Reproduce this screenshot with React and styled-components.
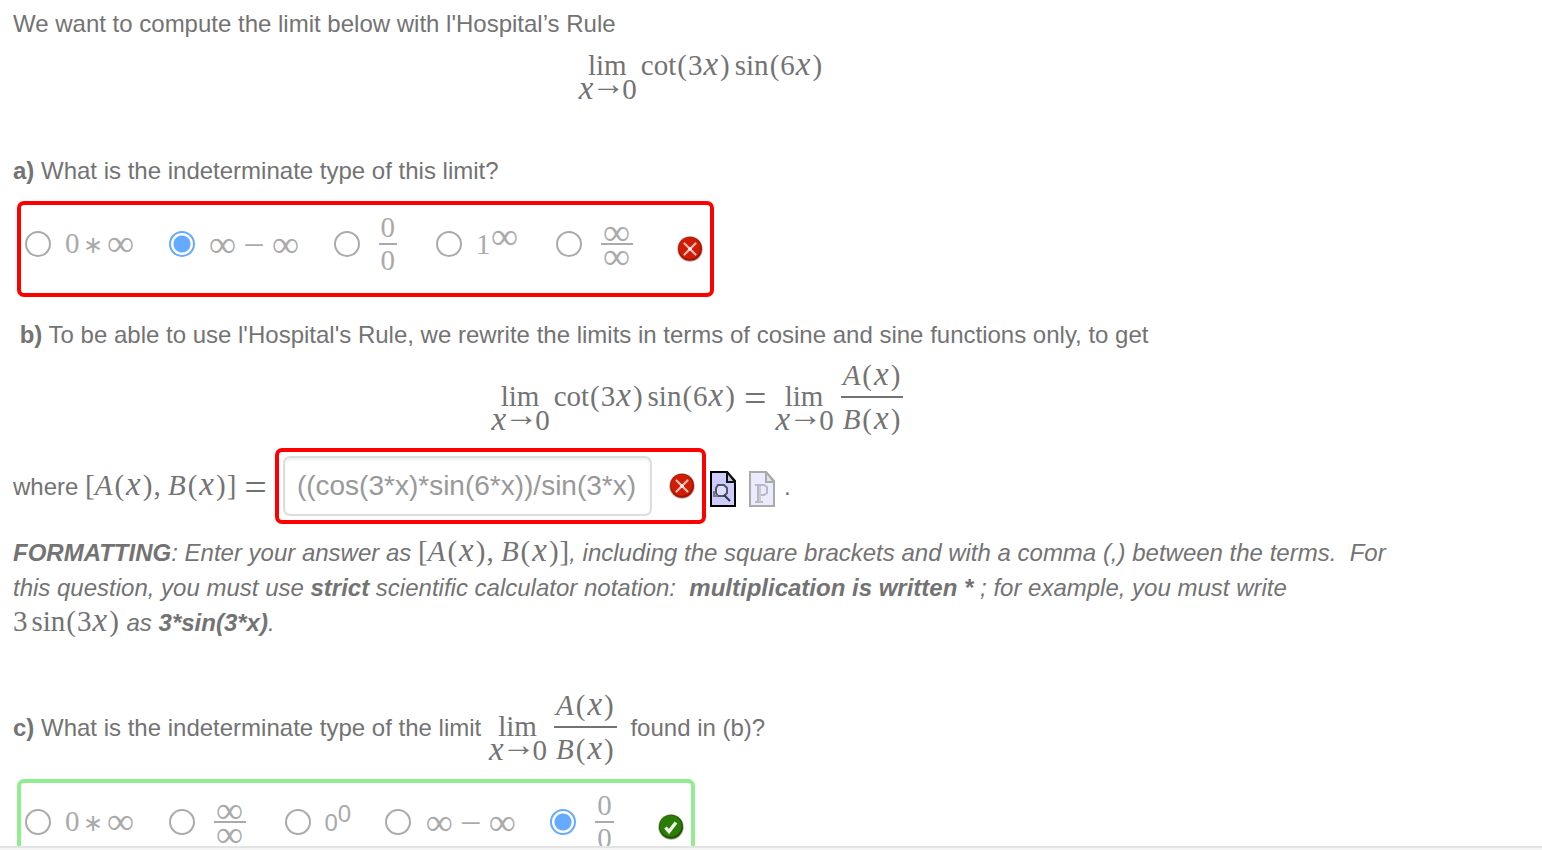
import React from 'react'
import { styled, createGlobalStyle } from 'styled-components'

const GlobalStyle = createGlobalStyle`
    * {
        box-sizing: border-box;
    }
    body {
        margin: 0;
        background-color: white;
    }
`
const Page = styled.div`
    height: 100vh;
    display: flex;
    flex-direction: column;
    font-family: "Liberation Sans", Arial, sans-serif;
    font-size: 24px;
    line-height: 35px;
    color: #737373;
`
const Content = styled.main`
    flex: 1;
    min-height: 0;
    overflow: hidden;
    padding: 6px 10% 0 13px;
`
const BottomBar = styled.footer`
    flex: none;
    height: 4px;
    border-top: 2px solid #e4e4e4;
    background-color: #f5f5f5;
`
const Text = styled.p`
    margin: 0;
`
const Section = styled.section`
    margin-top: ${(props) => props.$gap}px;
`
const Equation = styled.div`
    display: flex;
    justify-content: center;
    margin-top: ${(props) => props.$gap || 0}px;
`

// math atoms
const Math = styled.span`
    display: inline-block;
    font-family: "Liberation Serif", "Times New Roman", serif;
    font-size: 29px;
    font-style: normal;
    line-height: 30px;
    white-space: nowrap;
`
const Var = styled.i`
    padding: 0 1px;
    font-size: 33px;
    line-height: 20px;
`
const Name = styled.i`
    padding-right: 1px;
`
const Paren = styled.span`
    padding: 0 1px;
`
const Fn = styled.span`
    padding-left: 4px;
`
const Rel = styled.span`
    padding: 0 8px;
    font-size: 40px;
    line-height: 20px;
    vertical-align: -6px;
`
const Arrow = styled.span`
    margin: 0 -3px;
    font-size: 34px;
    line-height: 10px;
    vertical-align: 4px;
`
const Times = styled.span`
    display: inline-block;
    width: 27px;
    font-size: 24px;
    text-align: center;
`
const Minus = styled.span`
    display: inline-block;
    width: 35px;
    font-size: 38px;
    line-height: 20px;
    text-align: center;
    vertical-align: -4px;
`
const Limit = styled.span`
    display: inline-flex;
    flex-direction: column;
    align-items: center;
    line-height: 24px;
`
const Fraction = styled.span`
    display: inline-flex;
    flex-direction: column;
    align-items: center;
    vertical-align: middle;
    margin: 0 ${(props) => props.$space}px ${(props) => props.$lift || 0}px;
    line-height: ${(props) => props.$line}px;
`
const Rule = styled.span`
    align-self: stretch;
    height: 2px;
    background-color: currentColor;
`
const Part = styled.span`
    padding: 0 2px;
`
const InfinitySign = styled.span`
    display: inline-block;
    width: 28px;
    font-size: 38px;
    line-height: 20px;
    text-align: center;
    vertical-align: -3px;
`
const RaisedInfinity = styled(InfinitySign)`
    margin-right: 3px;
    line-height: 10px;
    vertical-align: 5px;
`
const Power = styled.span`
    vertical-align: 9px;
    line-height: 10px;
`

// answer widgets
const Feedback = styled.div`
    display: inline-flex;
    align-items: center;
    border: 4px solid ${(props) => (props.$correct ? '#90ee90' : '#ff0000')};
    border-radius: 7px;
    padding: 4px 7px 4px 4px;
`
const Choices = styled.fieldset`
    display: flex;
    align-items: center;
    gap: 34px;
    height: 88px;
    margin: 0 39px 0 0;
    border: none;
    padding: 0 0 10px;
`
const ChoiceBox = styled(Feedback)`
    display: flex;
    width: fit-content;
    margin: ${(props) => props.$gap}px 0 0 4px;
    padding: 0 7px 0 4px;
`
const Choice = styled.label`
    display: flex;
    align-items: center;
    gap: 14px;
    color: #aaa;
`
const Radio = styled.input`
    appearance: none;
    flex: none;
    width: 26px;
    height: 26px;
    margin: 0;
    border: 2px solid #aaa;
    border-radius: 50%;
    &:checked {
        border-color: #66aaff;
        background: radial-gradient(circle, #66aaff 8px, white 9px);
    }
`
const AnswerRow = styled.div`
    display: flex;
    align-items: center;
    margin-top: 4px;
`
const AnswerInput = styled.input`
    width: 369px;
    height: 60px;
    margin-right: 17px;
    border: 2px solid #ddd;
    border-radius: 7px;
    padding: 0 12px;
    box-shadow: inset 0 2px 3px #eee;
    background-color: white;
    color: #999;
    font: 28px "Liberation Sans", Arial, sans-serif;
`
const IconButton = styled.button`
    display: flex;
    margin: 6px 9px 0 4px;
    border: none;
    padding: 0;
    background: none;
    cursor: pointer;
`
const Formatting = styled(Text)`
    margin-top: 11px;
    font-style: italic;
`

const WrongIcon = () => (
  <svg width='26' height='26' viewBox='0 0 26 26' role='img' aria-label='Incorrect'>
    <circle cx='13' cy='13' r='12.7' fill='#c9a09b' />
    <circle cx='13' cy='12.8' r='12' fill='#9f1204' />
    <circle cx='12.6' cy='12' r='10.8' fill='#d01c04' />
    <path d='M7.500 7.500L18.500 18.500M18.500 7.500L7.500 18.500' stroke='#f5b9b0' strokeWidth='2.2' strokeLinecap='round' />
    <circle cx='13' cy='13' r='1.8' fill='white' />
  </svg>
)

const RightIcon = () => (
  <svg width='26' height='26' viewBox='0 0 26 26' role='img' aria-label='Correct'>
    <circle cx='13' cy='13' r='12.7' fill='#9fb295' />
    <circle cx='13' cy='12.8' r='12' fill='#1d5203' />
    <circle cx='12.6' cy='12' r='10.8' fill='#2c7d05' />
    <path d='M7.500 13.500L11 17.500L18 8.500' fill='none' stroke='#f0f7ec' strokeWidth='3.4' />
  </svg>
)

const PreviewIcon = () => (
  <svg width='26' height='36' viewBox='0 0 26 36'>
    <path d='M1 1H17L25 10V35H1Z' fill='#ccccff' stroke='#000' strokeWidth='2' />
    <path d='M17 1V11H25Z' fill='#c8c8d4' stroke='#111' strokeWidth='2' />
    <path d='M8 14H14L17 17V22L14 25H8L6 22V17Z' fill='#ddddff' stroke='#55556a' strokeWidth='2' />
    <path d='M4 20V25H8' fill='none' stroke='#77778c' strokeWidth='2' />
    <path d='M14 24L20 30' stroke='#333344' strokeWidth='2' />
  </svg>
)

const PlotIcon = () => (
  <svg width='26' height='36' viewBox='0 0 26 36'>
    <path d='M1 1H17L25 10V35H1Z' fill='#ebebff' stroke='#aaa' strokeWidth='2' />
    <path d='M17 1V11H25Z' fill='#e4e4e4' stroke='#aaa' strokeWidth='2' />
    <path d='M6 14H15L18 16V22L15 24H10M9 14V31M6 31H14' fill='none' stroke='#b8b8c0' strokeWidth='2' />
    <path d='M11 15V31' stroke='#ccccd6' strokeWidth='2' />
  </svg>
)

const Of = ({ children }) => (
  <>
    <Paren>(</Paren>{children}<Var>x</Var><Paren>)</Paren>
  </>
)

const Lim = () => (
  <Limit>
    <span>lim</span>
    <span><Var>x</Var><Arrow>→</Arrow>0</span>
  </Limit>
)

const Product = () => (
  <>
    <Lim /><Fn>cot<Of>3</Of></Fn><Fn>sin<Of>6</Of></Fn>
  </>
)

const Quotient = () => (
  <Fraction $line={42} $space={7} $lift={4}>
    <Part><Name>A</Name><Of /></Part>
    <Rule />
    <Part><Name>B</Name><Of /></Part>
  </Fraction>
)

const Pair = () => (
  <>
    [<Name>A</Name><Of />, <Name>B</Name><Of />]
  </>
)

const ZeroTimesInfinity = () => <Math>0<Times>∗</Times><InfinitySign>∞</InfinitySign></Math>

const InfinityMinusInfinity = () => (
  <Math><InfinitySign>∞</InfinitySign><Minus>−</Minus><InfinitySign>∞</InfinitySign></Math>
)

const ZeroOverZero = () => (
  <Math>
    <Fraction $line={31} $space={5}>
      <Part>0</Part>
      <Rule />
      <Part>0</Part>
    </Fraction>
  </Math>
)

const InfinityOverInfinity = () => (
  <Math>
    <Fraction $line={22} $space={5}>
      <Part><InfinitySign>∞</InfinitySign></Part>
      <Rule />
      <Part><InfinitySign>∞</InfinitySign></Part>
    </Fraction>
  </Math>
)

const partA = [
  { id: 'a1', label: <ZeroTimesInfinity /> },
  { id: 'a2', label: <InfinityMinusInfinity />, checked: true },
  { id: 'a3', label: <ZeroOverZero /> },
  { id: 'a4', label: <Math>1<RaisedInfinity>∞</RaisedInfinity></Math> },
  { id: 'a5', label: <InfinityOverInfinity /> },
]

const partC = [
  { id: 'c1', label: <ZeroTimesInfinity /> },
  { id: 'c2', label: <InfinityOverInfinity /> },
  { id: 'c3', label: <span>0<Power>0</Power></span> },
  { id: 'c4', label: <InfinityMinusInfinity /> },
  { id: 'c5', label: <ZeroOverZero />, checked: true },
]

const Question = ({ name, options, correct, gap }) => (
  <ChoiceBox $correct={correct} $gap={gap}>
    <Choices>
      {options.map((item) => (
        <Choice key={item.id} htmlFor={item.id}>
          <Radio type='radio' id={item.id} name={name} defaultChecked={item.checked} />
          {item.label}
        </Choice>
      ))}
    </Choices>
    {correct ? <RightIcon /> : <WrongIcon />}
  </ChoiceBox>
)

const App = () => {
  return (
    <Page>
      <GlobalStyle />
      <Content>
        <Text>We want to compute the limit below with l'Hospital’s Rule</Text>
        <Equation $gap={9}>
          <Math><Product /></Math>
        </Equation>
        <Section $gap={52}>
          <Text><b>a)</b> What is the indeterminate type of this limit?</Text>
          <Question name='part-a' options={partA} gap={13} />
        </Section>
        <Section $gap={20}>
          <Text>
            &nbsp;<b>b)</b> To be able to use l'Hospital's Rule, we rewrite the limits in terms of cosine and sine functions only, to get
          </Text>
          <Equation $gap={2}>
            <Math><Product /><Rel>=</Rel><Lim /><Quotient /></Math>
          </Equation>
          <AnswerRow>
            <label htmlFor='answer-b'>where <Math><Pair /><Rel>=</Rel></Math></label>
            <Feedback>
              <AnswerInput id='answer-b' type='text' defaultValue='((cos(3*x)*sin(6*x))/sin(3*x)' />
              <WrongIcon />
            </Feedback>
            <IconButton type='button' aria-label='Preview'><PreviewIcon /></IconButton>
            <IconButton type='button' aria-label='Plot'><PlotIcon /></IconButton>
            .
          </AnswerRow>
          <Formatting>
            <b>FORMATTING</b>: Enter your answer as <Math><Pair /></Math>, including the square brackets and with a comma (,) between the terms.&nbsp; For this question, you must use <b>strict</b> scientific calculator notation:&nbsp; <b>multiplication is written *</b> ; for example, you must write <Math>3<Fn>sin<Of>3</Of></Fn></Math> as <b>3*sin(3*x)</b>.
          </Formatting>
        </Section>
        <Section $gap={44}>
          <Text>
            <b>c)</b> What is the indeterminate type of the limit <Math><Lim /><Quotient /></Math> found in (b)?
          </Text>
          <Question name='part-c' options={partC} gap={5} correct />
        </Section>
      </Content>
      <BottomBar />
    </Page>
  )
}

export default App
